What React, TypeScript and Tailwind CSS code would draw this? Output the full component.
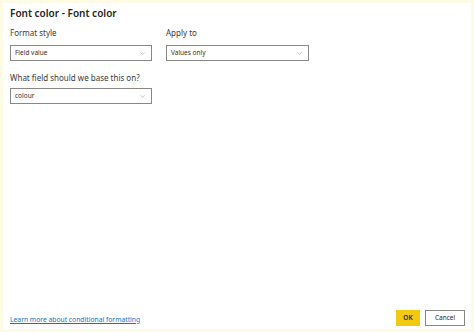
import { ChevronDown } from "lucide-react";

const Dropdown = ({ value, width }: { value: string; width: string }) => (
  <div
    className={`flex h-[16px] items-center justify-between border border-[#8a8886] bg-white pl-[4px] pr-[5px] ${width}`}
  >
    <span className="text-[6.5px] leading-[8px] text-[#323130]">{value}</span>
    <ChevronDown className="h-[7px] w-[7px] text-[#797775]" strokeWidth={1.5} />
  </div>
);

export default function App() {
  return (
    <div
      className="flex h-[332px] w-[474px] flex-col border-[3px] border-[#fdfbe4] bg-white pl-[7px] pr-[6px] pt-[2px] pb-[3px] text-[#323130]"
      style={{ fontFamily: '"Noto Sans", "Open Sans", sans-serif' }}
    >
      <h1 className="text-[10px] font-semibold leading-[16px] text-[#252423]">Font color - Font color</h1>

      <div className="mt-[6px] flex gap-[14px]">
        <div className="flex flex-col gap-[6px]">
          <label className="text-[8px] leading-[12px] text-[#3b3a39]">Format style</label>
          <Dropdown value="Field value" width="w-[142px]" />
        </div>
        <div className="flex flex-col gap-[6px]">
          <label className="text-[8px] leading-[12px] text-[#3b3a39]">Apply to</label>
          <Dropdown value="Values only" width="w-[143px]" />
        </div>
      </div>

      <div className="mt-[11px] flex flex-col gap-[4px]">
        <label className="text-[8px] leading-[12px] text-[#3b3a39]">What field should we base this on?</label>
        <Dropdown value="colour" width="w-[142px]" />
      </div>

      <div className="mt-auto flex items-end justify-between">
        <a href="#" className="mb-[1px] text-[6.75px] leading-[10px] text-[#1a6fc9] underline">
          Learn more about conditional formatting
        </a>
        <div className="flex gap-[5px]">
          <button className="h-[16px] w-[24px] bg-[#f2c811] text-[6.5px] font-semibold text-[#252423]">OK</button>
          <button className="h-[16px] w-[40px] border border-[#8a8886] bg-white text-[6.5px] text-[#252423]">Cancel</button>
        </div>
      </div>
    </div>
  );
}
